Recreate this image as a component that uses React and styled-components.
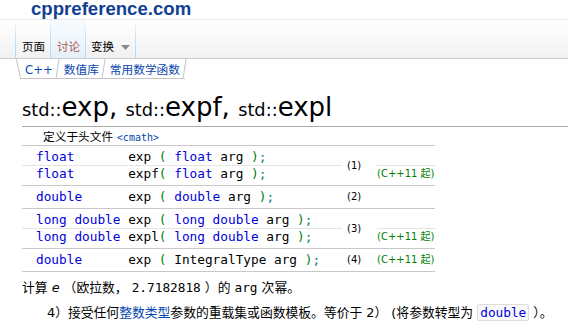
import React from 'react';
import styled, { createGlobalStyle } from 'styled-components';

const Global = createGlobalStyle`
  html, body { margin: 0; padding: 0; background: #fff; }
  body {
    font-family: "DejaVu Sans", "Noto Sans CJK SC", sans-serif;
    color: #000;
    width: 568px;
    height: 328px;
    overflow: hidden;
  }
`;

const Page = styled.div`
  position: relative;
  width: 568px;
`;

const Logo = styled.div`
  height: 19px;
  padding-left: 31px;
  font-family: "Liberation Sans", Arial, sans-serif;
  font-weight: bold;
  font-size: 18.6px;
  line-height: 17px;
  color: #123f94;
`;

const Toolbar = styled.nav`
  height: 38px;
  border-top: 1px solid #e8e8e8;
  border-bottom: 1px solid #c8ccd1;
  background: linear-gradient(#ffffff 0%, #fbfbfb 35%, #f1f1f1 100%);
  display: flex;
  align-items: stretch;
  padding-left: 15px;
`;

const Tab = styled.div`
  display: flex;
  align-items: flex-end;
  gap: 7px;
  padding: 0 ${p => p.$pr}px 4px ${p => p.$pl}px;
  font-size: 11.5px;
  line-height: 14px;
  color: ${p => (p.$new ? '#a8594f' : '#000')};
  border-left: 1px solid;
  border-right: ${p => (p.$last ? '1px solid' : '0')};
  border-image: linear-gradient(to bottom, rgba(167, 215, 249, 0) 0%, rgba(167, 215, 249, 0.6) 40%, #a7d7f9 100%) 1;
  background: ${p =>
    p.$active
      ? 'linear-gradient(to bottom, #f7fbfe 0%, #eef5fb 60%, #e6f0f8 100%)'
      : 'transparent'};
`;

const Arrow = styled.svg`
  width: 9px;
  height: 5px;
  margin-bottom: 4px;
`;

const Crumbs = styled.div`
  position: relative;
  display: flex;
  width: max-content;
  margin-left: 16px;
  height: 20px;
  align-items: center;
  &::before {
    content: '';
    position: absolute;
    left: 2px;
    top: 0;
    bottom: 0;
    border-left: 1px solid #c4c4c4;
    transform: skewX(12deg);
  }
  &::after {
    content: '';
    position: absolute;
    left: 4px;
    right: 1px;
    bottom: 0;
    border-bottom: 1px solid #c4c4c4;
  }
`;

const Crumb = styled.span`
  position: relative;
  align-self: stretch;
  padding: 4px 6px 0 ${p => (p.$first ? 9 : 5)}px;
  font-size: 11.7px;
  line-height: 14px;
  color: #0b47ad;
  &::after {
    content: '';
    position: absolute;
    right: 1px;
    top: 0;
    bottom: 0;
    border-right: 1px solid #c4c4c4;
    transform: skewX(-9deg);
  }
`;

const Content = styled.main`
  padding-left: 22px;
`;

const Title = styled.h1`
  margin: 12px 0 0;
  padding: 0;
  font-weight: normal;
  font-size: 26px;
  line-height: 32px;
  border-bottom: 1px solid #aaa;
  white-space: nowrap;
`;

const Ns = styled.span`
  font-size: 17.8px;
`;

const HeaderRow = styled.div`
  margin-top: 2px;
  height: 16px;
  padding-left: 21px;
  font-size: 11.7px;
  line-height: 16px;
`;

const HeaderLink = styled.span`
  font-family: "DejaVu Sans Mono", monospace;
  font-size: 10px;
  color: #0645ad;
`;

const Dcl = styled.table`
  border-collapse: collapse;
  width: 413px;
  border-bottom: 1px solid #c8c8c8;
`;

const DeclCell = styled.td`
  width: 306px;
  padding: ${p => (p.$first ? 3 : 0)}px 0 ${p => (p.$last ? 3 : 0)}px 14px;
  font-family: "DejaVu Sans Mono", monospace;
  font-size: 12.75px;
  line-height: 16px;
  white-space: pre;
  border-top: 1px solid ${p => (p.$first ? '#c8c8c8' : '#e4e4e4')};
`;

const NumCell = styled.td`
  width: 30px;
  padding: 0 0 0 5px;
  font-size: 10px;
  line-height: 12px;
  vertical-align: middle;
  border-top: 1px solid #c8c8c8;
`;

const VerCell = styled.td`
  width: 58px;
  padding: ${p => (p.$first ? 3 : 0)}px 0 ${p => (p.$last ? 3 : 0)}px 0;
  font-size: 10px;
  line-height: 12px;
  color: #008000;
  vertical-align: middle;
  white-space: nowrap;
  border-top: 1px solid ${p => (p.$first ? '#c8c8c8' : '#e4e4e4')};
`;

const Kw = styled.span`
  color: #0000dd;
`;
const Br = styled.span`
  color: #008000;
`;
const Sy = styled.span`
  color: #008080;
`;

const Para = styled.p`
  margin: ${p => p.$mt}px 0 0;
  padding-left: ${p => p.$indent || 0}px;
  font-size: 12.8px;
  line-height: 18px;
  white-space: nowrap;
`;

const Mono = styled.span`
  font-family: "DejaVu Sans Mono", monospace;
  font-size: 12.75px;
`;

const Link = styled.span`
  color: #0645ad;
`;

const Code = styled.span`
  display: inline-block;
  font-family: "DejaVu Sans Mono", monospace;
  font-size: 12.75px;
  line-height: 15px;
  color: #0000dd;
  background: #f9f9f9;
  border: 1px solid #ddd;
  border-radius: 2px;
  padding: 0 2px;
`;

const groups = [
  {
    num: '(1)',
    rows: [
      { type: 'float', name: 'exp ', arg: [['float', true], [' arg', false]] },
      { type: 'float', name: 'expf', arg: [['float', true], [' arg', false]], ver: '(C++11 起)' },
    ],
  },
  {
    num: '(2)',
    rows: [{ type: 'double', name: 'exp ', arg: [['double', true], [' arg', false]] }],
  },
  {
    num: '(3)',
    rows: [
      { type: 'long double', name: 'exp ', arg: [['long double', true], [' arg', false]] },
      { type: 'long double', name: 'expl', arg: [['long double', true], [' arg', false]], ver: '(C++11 起)' },
    ],
  },
  {
    num: '(4)',
    rows: [{ type: 'double', name: 'exp ', arg: [['IntegralType arg', false]], ver: '(C++11 起)' }],
  },
];

function Decl({ row }) {
  return (
    <>
      <Kw>{row.type}</Kw>
      {' '.repeat(12 - row.type.length)}
      {row.name}
      <Br>(</Br> {row.arg.map(([t, kw], i) => (kw ? <Kw key={i}>{t}</Kw> : <span key={i}>{t}</span>))} <Br>)</Br>
      <Sy>;</Sy>
    </>
  );
}

export default function App() {
  return (
    <Page>
      <Global />
      <Logo>cppreference.com</Logo>
      <Toolbar>
        <Tab $pl={6} $pr={5}>页面</Tab>
        <Tab $pl={6} $pr={5} $active $new>讨论</Tab>
        <Tab $pl={5} $pr={5} $last>
          变换
          <Arrow viewBox="0 0 9 5">
            <polygon points="0,0 9,0 4.5,5" fill="#8a8a8a" />
          </Arrow>
        </Tab>
      </Toolbar>
      <Crumbs>
        <Crumb $first>C++</Crumb>
        <Crumb>数值库</Crumb>
        <Crumb>常用数学函数</Crumb>
      </Crumbs>
      <Content>
        <Title>
          <Ns>std::</Ns>exp, <Ns>std::</Ns>expf, <Ns>std::</Ns>expl
        </Title>
        <HeaderRow>
          定义于头文件 <HeaderLink>&lt;cmath&gt;</HeaderLink>
        </HeaderRow>
        <Dcl>
          {groups.map((g, gi) => (
            <tbody key={gi}>
              {g.rows.map((r, ri) => (
                <tr key={ri}>
                  <DeclCell $first={ri === 0} $last={ri === g.rows.length - 1}>
                    <Decl row={r} />
                  </DeclCell>
                  {ri === 0 && <NumCell rowSpan={g.rows.length}>{g.num}</NumCell>}
                  <VerCell $first={ri === 0} $last={ri === g.rows.length - 1}>
                    {r.ver || ''}
                  </VerCell>
                </tr>
              ))}
            </tbody>
          ))}
        </Dcl>
        <Para $mt={7}>
          计算 <i>e</i> （欧拉数， <Mono>2.7182818</Mono> ）的 <Mono>arg</Mono> 次幂。
        </Para>
        <Para $mt={7} $indent={25}>
          4）接受任何<Link>整数类型</Link>参数的重载集或函数模板。等价于 2） (将参数转型为 <Code>double</Code> ）。
        </Para>
      </Content>
    </Page>
  );
}
